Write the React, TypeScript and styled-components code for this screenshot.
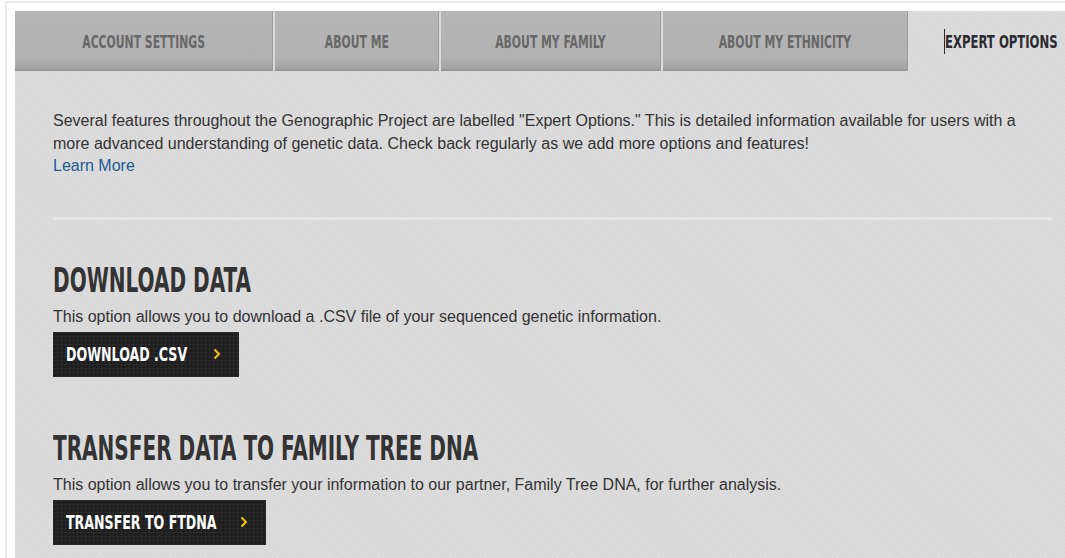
import styled, { createGlobalStyle } from "styled-components";

const GlobalStyle = createGlobalStyle`
  html, body {
    margin: 0;
    padding: 0;
    background: #ffffff;
    overflow: hidden;
  }
  body {
    font-family: "Liberation Sans", Arial, sans-serif;
  }
`;

const Frame = styled.div`
  margin: 1px 0 0 5px;
  border-top: 2px solid #ececec;
  border-left: 2px solid #ececec;
  padding: 8px 0 0 8px;
  height: 600px;
  box-sizing: border-box;
`;

const Panel = styled.div`
  width: 1060px;
  min-height: 560px;
  background-color: #d9d9d9;
  background-image: repeating-linear-gradient(
    45deg,
    rgba(255, 255, 255, 0.1) 0px,
    rgba(255, 255, 255, 0.1) 1px,
    transparent 1px,
    transparent 3px
  );
`;

const TabBar = styled.div`
  display: flex;
  gap: 2px;
  height: 60px;
`;

const Tab = styled.div<{ $w?: number; $active?: boolean }>`
  display: flex;
  align-items: center;
  box-sizing: border-box;
  ${(p) =>
    p.$w
      ? `width: ${p.$w}px; flex-shrink: 0; justify-content: center;`
      : "flex: 1; min-width: 0; justify-content: flex-start; padding-left: 34px;"}
  background: ${(p) =>
    p.$active
      ? "transparent"
      : "linear-gradient(to bottom, #b6b6b6 0%, #b1b1b1 80%, #a3a3a3 96%, #8f8f8f 100%)"};
  border-right: ${(p) => (p.$active ? "none" : "1px solid #9c9c9c")};
  font-family: "DejaVu Sans Condensed", "Liberation Sans Narrow", "Liberation Sans", sans-serif;
  font-weight: bold;
  font-size: 18px;
  color: ${(p) => (p.$active ? "#2b2b30" : "#686868")};
`;

const Squeeze = styled.span<{ $sx: number }>`
  display: inline-block;
  white-space: nowrap;
  transform: scaleX(${(p) => p.$sx});
  transform-origin: left center;
`;

const TabLabel = styled(Squeeze)<{ $left?: boolean }>`
  transform-origin: ${(p) => (p.$left ? "left center" : "center center")};
`;

const Caret = styled.span`
  display: inline-block;
  flex-shrink: 0;
  width: 1px;
  height: 25px;
  background: #2b2b30;
`;

const Content = styled.div`
  padding: 39px 23px 0 38px;
`;

const Intro = styled.p`
  margin: 0;
  font-size: 16px;
  line-height: 22.5px;
  color: #333333;
  width: 980px;
`;

const LearnLink = styled.a`
  color: #1c5a97;
  text-decoration: none;
`;

const Divider = styled.hr`
  border: none;
  height: 3px;
  background: #e6e6e6;
  margin: 39px 0 0;
`;

const Section = styled.section`
  display: flex;
  flex-direction: column;
  align-items: flex-start;
`;

const Heading = styled.h2<{ $top: number }>`
  margin: ${(p) => p.$top}px 0 6px;
  font-family: "DejaVu Sans Condensed", "Liberation Sans Narrow", "Liberation Sans", sans-serif;
  font-weight: bold;
  font-size: 34px;
  line-height: 40px;
  color: #333333;
`;

const Desc = styled.p`
  margin: 0;
  font-size: 16px;
  line-height: 22px;
  color: #333333;
`;

const DarkButton = styled.button`
  display: flex;
  align-items: center;
  margin-top: 4px;
  height: 45px;
  padding: 0 18px 0 13px;
  border: none;
  cursor: pointer;
  background-color: #1e1e1e;
  background-image: linear-gradient(rgba(255, 255, 255, 0.04) 1px, transparent 1px),
    linear-gradient(90deg, rgba(255, 255, 255, 0.04) 1px, transparent 1px);
  background-size: 4px 4px;
  font-family: "DejaVu Sans Condensed", "Liberation Sans Narrow", "Liberation Sans", sans-serif;
  font-weight: bold;
  font-size: 20px;
  color: #ffffff;
`;

const ButtonText = styled.span<{ $w: number }>`
  display: block;
  width: ${(p) => p.$w}px;
  text-align: left;
`;

const Chevron = styled.svg`
  width: 8px;
  height: 12px;
  margin-left: 26px;
`;

const tabs = [
  { label: "ACCOUNT SETTINGS", w: 258 },
  { label: "ABOUT ME", w: 164 },
  { label: "ABOUT MY FAMILY", w: 220 },
  { label: "ABOUT MY ETHNICITY", w: 245 },
];

function Arrow() {
  return (
    <Chevron viewBox="0 0 8 12">
      <path d="M1.5 1.5 L6 6 L1.5 10.5" fill="none" stroke="#f2c500" strokeWidth="2" />
    </Chevron>
  );
}

export default function App() {
  return (
    <>
      <GlobalStyle />
      <Frame>
        <Panel>
          <TabBar>
            {tabs.map((t) => (
              <Tab key={t.label} $w={t.w}>
                <TabLabel $sx={0.67}>{t.label}</TabLabel>
              </Tab>
            ))}
            <Tab $active>
              <Caret />
              <TabLabel $sx={0.72} $left>
                EXPERT OPTIONS
              </TabLabel>
            </Tab>
          </TabBar>
          <Content>
            <Intro>
              Several features throughout the Genographic Project are labelled "Expert Options." This is
              detailed information available for users with a more advanced understanding of genetic data.
              Check back regularly as we add more options and features!
              <br />
              <LearnLink href="#">Learn More</LearnLink>
            </Intro>
            <Divider />
            <Section>
              <Heading $top={40}>
                <Squeeze $sx={0.655}>DOWNLOAD DATA</Squeeze>
              </Heading>
              <Desc>This option allows you to download a .CSV file of your sequenced genetic information.</Desc>
              <DarkButton>
                <ButtonText $w={121}>
                  <Squeeze $sx={0.7}>DOWNLOAD .CSV</Squeeze>
                </ButtonText>
                <Arrow />
              </DarkButton>
            </Section>
            <Section>
              <Heading $top={51}>
                <Squeeze $sx={0.655}>TRANSFER DATA TO FAMILY TREE DNA</Squeeze>
              </Heading>
              <Desc>
                This option allows you to transfer your information to our partner, Family Tree DNA, for further
                analysis.
              </Desc>
              <DarkButton>
                <ButtonText $w={148}>
                  <Squeeze $sx={0.7}>TRANSFER TO FTDNA</Squeeze>
                </ButtonText>
                <Arrow />
              </DarkButton>
            </Section>
          </Content>
        </Panel>
      </Frame>
    </>
  );
}
